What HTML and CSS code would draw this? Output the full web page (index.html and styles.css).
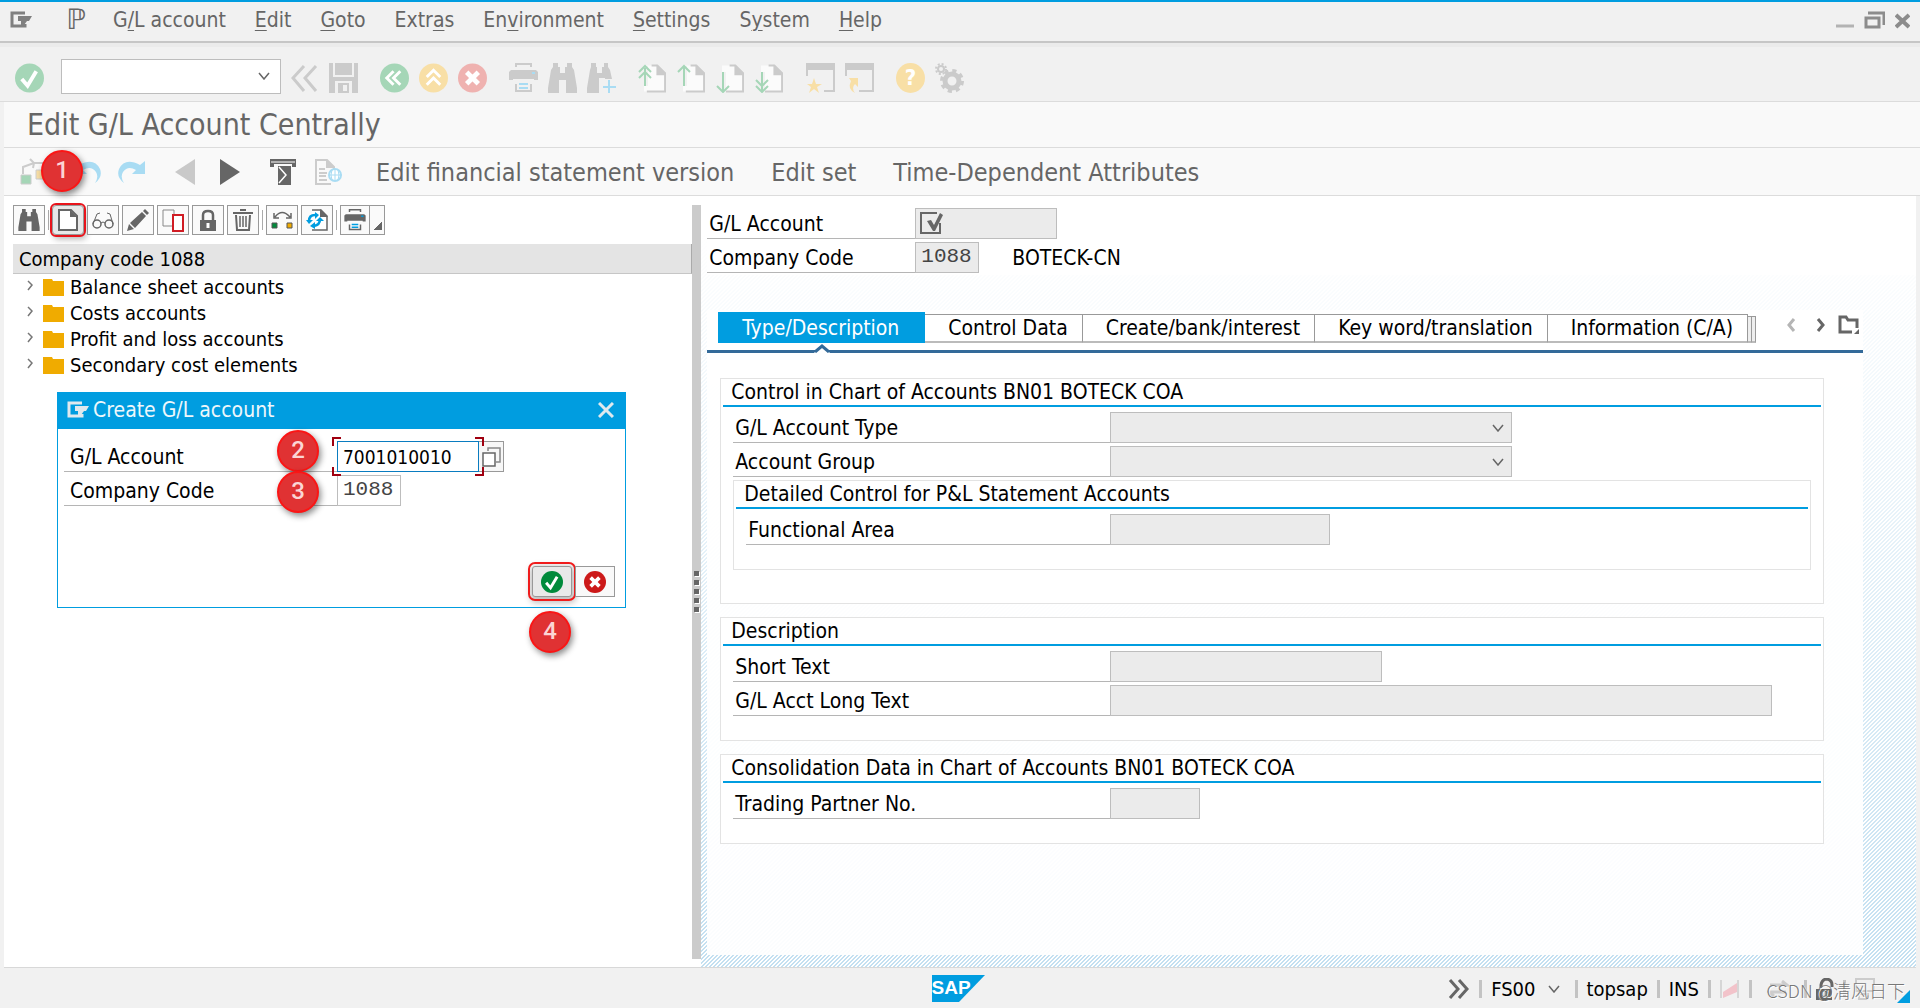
FILE: index.html
```html
<!DOCTYPE html>
<html lang="en">
<head>
<meta charset="utf-8">
<title>Edit G/L Account Centrally</title>
<link rel="stylesheet" href="styles.css">
</head>
<body>
<svg class="defs" aria-hidden="true">
  <symbol id="exit" viewBox="0 0 22 18"><path d="M15 2H2v13h13v-2" fill="none" stroke="currentColor" stroke-width="3"/><path d="M8 5h14l-3 5h-2l-3 4h-3v-4H8z" fill="currentColor"/></symbol>
  <symbol id="binoc" viewBox="0 0 29 30"><path d="M5 0h5v4h2v6h5V4h2V0h5v4l2 3 3 18v5H18V17h-7v13H0v-5L3 7l2-3z" fill="currentColor"/></symbol>
  <symbol id="printer" viewBox="0 0 29 30"><path d="M7 4V1h15v3M7 21v7h15v-7" fill="none" stroke="currentColor" stroke-width="2"/><path d="M2 7h25l2 2v8h-4v-1H4v1H0V9z" fill="currentColor"/><path d="M10 21h9M10 25h9M23 10h3" stroke="var(--ink)" stroke-width="2"/></symbol>
  <symbol id="chev" viewBox="0 0 12 8"><path d="M1 1l5 6 5-6" fill="none" stroke="currentColor" stroke-width="1.5"/></symbol>
  <symbol id="folder" viewBox="0 0 21 18"><path d="M0 1h9l1 2h11v15H0z" fill="#f0ab00"/></symbol>
  <symbol id="page" viewBox="0 0 24 30"><path d="M1 2h14l8 8v19H1z" fill="#fbfbfb"/><path d="M9 2h6l8 8v19H4" fill="none" stroke="currentColor" stroke-width="2"/><path d="M14 1l10 9v2H14z" fill="currentColor"/></symbol>
  <symbol id="tick" viewBox="0 0 30 30"><circle cx="15" cy="15" r="15" fill="currentColor"/><path d="M7 16l6 7 9-15" fill="none" stroke="#fff" stroke-width="4"/></symbol>
  <symbol id="cross" viewBox="0 0 30 30"><circle cx="15" cy="15" r="15" fill="currentColor"/><path d="M9 9l12 12M21 9L9 21" fill="none" stroke="#fff" stroke-width="5"/></symbol>
</svg>

<header class="menubar">
  <svg class="exit"><use href="#exit"/></svg>
  <span class="session">ℙ</span>
  <nav class="menus">
    <button>G<u>/</u>L account</button><button><u>E</u>dit</button><button><u>G</u>oto</button><button>Extr<u>a</u>s</button><button>En<u>v</u>ironment</button><button><u>S</u>ettings</button><button>S<u>y</u>stem</button><button><u>H</u>elp</button>
  </nav>
  <div class="winbtns">
    <button aria-label="Minimize"><svg width="18" height="18"><path d="M0 15h18" stroke="#b3b3b3" stroke-width="3"/></svg></button>
    <button aria-label="Restore"><svg width="21" height="18"><path d="M4 2h16v12" fill="none" stroke="#8c8c8c" stroke-width="3"/><path d="M2 7h13v9H2z" fill="none" stroke="#8c8c8c" stroke-width="3"/></svg></button>
    <button aria-label="Close"><svg width="15" height="18"><path d="M1 4l13 12M14 4L1 16" stroke="#8c8c8c" stroke-width="4"/></svg></button>
  </div>
</header>

<div class="stdbar">
  <button class="ib g" aria-label="Enter"><svg><use href="#tick"/></svg></button>
  <div class="command"><input type="text" aria-label="Command"><svg class="chev"><use href="#chev"/></svg></div>
  <div class="grp">
    <button class="ib" aria-label="Hide command"><svg viewBox="0 0 29 30"><path d="M14 3L3 15l11 13M26 3L15 15l11 13" fill="none" stroke="currentColor" stroke-width="3"/></svg></button>
    <button class="ib" aria-label="Save"><svg viewBox="0 0 29 30"><path d="M0 0h4v14h21V0h4v30H0z" fill="currentColor"/><path d="M6 0h17v12H6z" fill="currentColor"/><path d="M6 18h17v12H6z" fill="#f1f1f1"/><path d="M9 20h11v10H9z" fill="currentColor"/><path d="M14 22h4v6h-4z" fill="#f1f1f1"/></svg></button>
  </div>
  <div class="grp">
    <button class="ib g" aria-label="Back"><svg viewBox="0 0 30 30"><circle cx="15" cy="15" r="15" fill="currentColor"/><path d="M14 8l-7 7 7 7M21 8l-7 7 7 7" fill="none" stroke="#fff" stroke-width="3"/></svg></button>
    <button class="ib y" aria-label="Exit"><svg viewBox="0 0 30 30"><circle cx="15" cy="15" r="15" fill="currentColor"/><path d="M8 14l7-7 7 7M8 22l7-7 7 7" fill="none" stroke="#fff" stroke-width="3"/></svg></button>
    <button class="ib r" aria-label="Cancel"><svg><use href="#cross"/></svg></button>
  </div>
  <div class="grp">
    <button class="ib" aria-label="Print"><svg><use href="#printer"/></svg></button>
    <button class="ib" aria-label="Find"><svg><use href="#binoc"/></svg></button>
    <button class="ib" aria-label="Find next"><svg viewBox="0 0 29 30"><path d="M4 0h5v4h1v6h5V4h2V0h4v4l2 3 2 9h-7v-1h-6v15H0v-5L3 7l1-3z" fill="currentColor"/><path d="M22 17v13M16 24h13" stroke="#a9dcf3" stroke-width="2"/></svg></button>
  </div>
  <div class="grp">
    <button class="ib" aria-label="First page"><svg viewBox="0 0 29 30"><use href="#page" x="5" width="23" height="30"/><path class="halo" d="M7 3v20"/><path d="M7 5v18M1 9l6-6 6 6M1 15l6-6 6 6" fill="none" stroke="#a5d6b7" stroke-width="2"/></svg></button>
    <button class="ib" aria-label="Previous page"><svg viewBox="0 0 29 30"><use href="#page" x="5" width="23" height="30"/><path class="halo" d="M7 3v20"/><path d="M7 3v20M1 9l6-6 6 6" fill="none" stroke="#a5d6b7" stroke-width="2"/></svg></button>
    <button class="ib" aria-label="Next page"><svg viewBox="0 0 29 30"><use href="#page" x="5" width="23" height="30"/><path class="halo" d="M7 9v21"/><path d="M7 9v19M1 23l6 6 6-6" fill="none" stroke="#a5d6b7" stroke-width="2"/></svg></button>
    <button class="ib" aria-label="Last page"><svg viewBox="0 0 29 30"><use href="#page" x="5" width="23" height="30"/><path class="halo" d="M7 9v21"/><path d="M7 9v19M1 17l6 6 6-6M1 23l6 6 6-6" fill="none" stroke="#a5d6b7" stroke-width="2"/></svg></button>
  </div>
  <div class="grp">
    <button class="ib" aria-label="New session"><svg viewBox="0 0 29 30"><path d="M0 0h29v7H0zM0 7h2v6H0z" fill="currentColor"/><path d="M28 6v22H18" fill="none" stroke="currentColor" stroke-width="2"/><path d="M8 15l2 6h6l-5 3 2 6-5-4-5 4 2-6-4-3h5z" fill="#f8dfa6"/></svg></button>
    <button class="ib" aria-label="Create shortcut"><svg viewBox="0 0 29 30"><path d="M0 0h29v7H0zM0 7h2v6H0z" fill="currentColor"/><path d="M28 6v22H14" fill="none" stroke="currentColor" stroke-width="2"/><path d="M4 15h9v9l-3-3q-4 4 0 9-8-4-4-12z" fill="#f8dfa6"/></svg></button>
  </div>
  <div class="grp">
    <button class="ib y help" aria-label="Help">?</button>
    <button class="ib" aria-label="Customize layout"><svg viewBox="0 0 29 30"><circle cx="17" cy="18" r="7" fill="none" stroke="currentColor" stroke-width="5"/><circle cx="17" cy="18" r="10" fill="none" stroke="currentColor" stroke-width="4" stroke-dasharray="4 3.85"/><circle cx="6" cy="6" r="3" fill="none" stroke="currentColor" stroke-width="2"/><circle cx="6" cy="6" r="5" fill="none" stroke="currentColor" stroke-width="2" stroke-dasharray="2 1.93"/></svg></button>
  </div>
</div>

<h1 class="title">Edit G/L Account Centrally</h1>

<div class="appbar">
  <div class="pair">
    <button class="ab" aria-label="Change view"><svg viewBox="0 0 28 28"><path d="M3 16V9l11-4M10 1l4 4-1 5M14 5h12v6" fill="none" stroke="#ccc" stroke-width="2"/><path d="M1 17h10v9H1z" fill="#a5d6b7" stroke="#ccc"/><path d="M16 12h10v9H16z" fill="#f8dfa6" stroke="#ccc"/></svg></button>
  </div>
  <div class="pair">
    <button class="ab" aria-label="Undo"><svg viewBox="0 0 28 28"><path d="M1 3v13h13l-4-4q8-5 13 2 3 5-1 11 8-6 5-14Q21-1 6 7z" fill="#a9dcf3"/></svg></button>
    <button class="ab" aria-label="Redo"><svg viewBox="0 0 28 28"><path d="M27 3v13H14l4-4q-8-5-13 2-3 5 1 11-8-6-5-14Q7-1 22 7z" fill="#a9dcf3"/></svg></button>
  </div>
  <div class="pair">
    <button class="ab" aria-label="Previous"><svg viewBox="0 0 28 28"><path d="M24 1v26L4 14z" fill="#c9c9c9"/></svg></button>
    <button class="ab" aria-label="Next"><svg viewBox="0 0 28 28"><path d="M4 1v26l20-13z" fill="#666"/></svg></button>
  </div>
  <div class="pair">
    <button class="ab" aria-label="Other object"><svg viewBox="0 0 28 28"><path d="M1 1h26v8h-4V6H5v3H1z" fill="#666"/><path d="M2 4h24" stroke="#fff"/><path d="M9 8h13v19H9z" fill="#666"/><path d="M10 9l7 8-7 8" fill="none" stroke="#fff" stroke-width="1.5"/></svg></button>
    <button class="ab" aria-label="Display in web"><svg viewBox="0 0 28 28"><path d="M17 26H2V2h11l7 7v2" fill="none" stroke="#ccc" stroke-width="2"/><path d="M12 1l9 9h-9z" fill="#ccc"/><path d="M5 11h6M5 15h8M5 18h7M5 22h8" stroke="#ccc" stroke-width="2"/><circle cx="21" cy="17" r="6" fill="#fff" stroke="#a9dcf3" stroke-width="2"/><path d="M15 17h13M21 11v12M18 12q-2 5 0 10M24 12q2 5 0 10" fill="none" stroke="#a9dcf3"/></svg></button>
  </div>
  <div class="apptexts"><button>Edit financial statement version</button><button>Edit set</button><button>Time-Dependent Attributes</button></div>
  <span class="badge b1">1</span>
</div>

<main class="work">
  <section class="nav">
    <div class="tools">
      <button class="tb" aria-label="Find"><svg width="22" height="22"><use href="#binoc"/></svg></button>
      <i></i>
      <button class="tb marked" aria-label="Create"><svg width="20" height="22"><path d="M1 1h12l6 6v14H1z" fill="#fff" stroke="#666" stroke-width="2"/><path d="M12 1l7 7h-7z" fill="#666"/></svg></button>
      <button class="tb" aria-label="Display"><svg width="22" height="18"><path d="M1 13L5 3l3-1M21 13L18 3l-3-1" fill="none" stroke="#666"/><circle cx="5" cy="13" r="4" fill="none" stroke="#666" stroke-width="1.5"/><circle cx="17" cy="13" r="4" fill="none" stroke="#666" stroke-width="1.5"/><path d="M9 12q2-2 4 0" fill="none" stroke="#666"/></svg></button>
      <button class="tb" aria-label="Change"><svg width="22" height="22"><path d="M0 22l2-7 5 5zM3 14L15 3l4 4L8 19zM16 2l2-2 4 4-2 2z" fill="#666"/></svg></button>
      <button class="tb" aria-label="Copy"><svg width="23" height="23"><path d="M10 17H1V1h11v4" fill="none" stroke="#888" stroke-width="1"/><path d="M11 6h10v16H11z" fill="#fff" stroke="#d01c24" stroke-width="2"/></svg></button>
      <button class="tb" aria-label="Lock"><svg width="18" height="22"><path d="M4 11V6q0-4 5-4t5 4v5" fill="none" stroke="#666" stroke-width="2.5"/><path d="M1 11h16v11H1z" fill="#666"/><path d="M9 14v5" stroke="#fff" stroke-width="3"/></svg></button>
      <button class="tb" aria-label="Delete"><svg width="20" height="22"><path d="M0 4h20M7 1h6" stroke="#666" stroke-width="2"/><path d="M3 6l1 15h12l1-15" fill="none" stroke="#666" stroke-width="2"/><path d="M7 7v11M10 7v11M13 7v11" stroke="#666" stroke-width="1.5"/></svg></button>
      <i></i>
      <button class="tb" aria-label="Relations"><svg width="23" height="20"><path d="M4 7q7-9 15 0M3 3v5h5M20 3v5h-5" fill="none" stroke="#666" stroke-width="1.5"/><path d="M1 13h5v5H1z" fill="#008a3b" stroke="#555"/><path d="M16 13h5v5h-5z" fill="#f0ab00" stroke="#555"/></svg></button>
      <button class="tb" aria-label="Refresh"><svg width="22" height="22"><path d="M6 1h9l6 6v14H6" fill="#fff" stroke="#666" stroke-width="1.5"/><path d="M14 0l8 8h-8z" fill="#666"/><path d="M3 12q0-6 6-6M14 10q0 6-6 7" fill="none" stroke="#009de0" stroke-width="2.5"/><path d="M0 11h7l-4 4zM9 3l4 3-4 4zM10 12h8l-4-4zM9 13v7l-5-3z" fill="#009de0"/></svg></button>
      <i></i>
      <button class="tb wide" aria-label="Print"><svg width="22" height="22"><use href="#printer"/></svg><span class="more"></span></button>
    </div>
    <div class="treehead">Company code 1088</div>
    <ul class="tree">
      <li><svg class="tw" viewBox="0 0 7 11"><path d="M1 1l4 4-4 5" fill="none" stroke="#777" stroke-width="1.5"/></svg><svg class="fo"><use href="#folder"/></svg>Balance sheet accounts</li>
      <li><svg class="tw" viewBox="0 0 7 11"><path d="M1 1l4 4-4 5" fill="none" stroke="#777" stroke-width="1.5"/></svg><svg class="fo"><use href="#folder"/></svg>Costs accounts</li>
      <li><svg class="tw" viewBox="0 0 7 11"><path d="M1 1l4 4-4 5" fill="none" stroke="#777" stroke-width="1.5"/></svg><svg class="fo"><use href="#folder"/></svg>Profit and loss accounts</li>
      <li><svg class="tw" viewBox="0 0 7 11"><path d="M1 1l4 4-4 5" fill="none" stroke="#777" stroke-width="1.5"/></svg><svg class="fo"><use href="#folder"/></svg>Secondary cost elements</li>
    </ul>

    <div class="dialog" role="dialog" aria-labelledby="dlg">
      <div class="dlghead"><svg class="exit"><use href="#exit"/></svg><h2 id="dlg">Create G/L account</h2><button aria-label="Close"><svg width="16" height="16"><path d="M1 1l14 14M15 1L1 15" stroke="#dfe9ee" stroke-width="3"/></svg></button></div>
      <div class="dlgbody">
        <div class="row"><label for="acc">G/L Account</label><div class="focus"><input id="acc" type="text" value="7001010010"></div><button class="f4" aria-label="Possible entries"><svg width="19" height="20"><path d="M6 4V1h12v14h-4" fill="none" stroke="#888" stroke-width="1.5"/><path d="M1 6h12v13H1z" fill="#fff" stroke="#666" stroke-width="1.5"/></svg></button></div>
        <div class="row"><label for="cc">Company Code</label><input id="cc" class="code plain" type="text" value="1088"></div>
        <div class="actions">
          <button class="ok" aria-label="Continue"><svg><use href="#tick"/></svg></button><button class="no" aria-label="Cancel"><svg><use href="#cross"/></svg></button>
        </div>
      </div>
      <span class="badge b2">2</span><span class="badge b3">3</span><span class="badge b4">4</span>
    </div>
  </section>

  <div class="splitter"><span></span><span></span><span></span><span></span><span></span></div>

  <section class="detail">
    <div class="keys">
      <div class="row"><label for="k1">G/L Account</label><div class="req"><input id="k1" type="text" readonly><svg width="27" height="26"><path d="M19 4H3v20h19V14" fill="none" stroke="#666" stroke-width="2"/><path d="M9 12l4-1 3 5 6-12 3 2-8 16h-2z" fill="#666"/></svg></div></div>
      <div class="row"><label for="k2">Company Code</label><input id="k2" class="code" type="text" value="1088" readonly><span class="name">BOTECK-CN</span></div>
    </div>
    <div class="strip">
      <div class="tabs" role="tablist">
        <button class="tab active" role="tab" aria-selected="true">Type/Description</button><button class="tab" role="tab">Control Data</button><button class="tab" role="tab">Create/bank/interest</button><button class="tab" role="tab">Key word/translation</button><button class="tab" role="tab">Information (C/A)</button><span class="stack"></span><span class="stack"></span>
      </div>
      <div class="tabnav">
        <button aria-label="Scroll left"><svg width="10" height="14"><path d="M8 1L3 7l5 6" fill="none" stroke="#b5b5b5" stroke-width="3"/></svg></button>
        <button aria-label="Scroll right"><svg width="10" height="14"><path d="M2 1l5 6-5 6" fill="none" stroke="#666" stroke-width="3"/></svg></button>
        <button aria-label="Tab list"><svg width="22" height="20"><path d="M14 17H2V2h6l2 3h9v8" fill="none" stroke="#666" stroke-width="3"/><path d="M21 14v5h-5z" fill="#666"/></svg></button>
      </div>
    </div>
    <div class="rule"><svg width="16" height="9"><path d="M0 9l8-8 8 8z" fill="#fff"/><path d="M1 8l7-6 7 6" fill="none" stroke="#336a99" stroke-width="3"/></svg></div>
    <div class="page">
      <fieldset class="box tall">
        <legend>Control in Chart of Accounts BN01 BOTECK COA</legend>
        <div class="rows">
          <div class="row"><label for="f1">G/L Account Type</label><div class="combo"><select id="f1" disabled></select><svg class="chev"><use href="#chev"/></svg></div></div>
          <div class="row"><label for="f2">Account Group</label><div class="combo"><select id="f2" disabled></select><svg class="chev"><use href="#chev"/></svg></div></div>
          <fieldset class="box inner">
            <legend>Detailed Control for P&amp;L Statement Accounts</legend>
            <div class="rows"><div class="row"><label for="f3">Functional Area</label><input id="f3" class="w220" type="text" readonly></div></div>
          </fieldset>
        </div>
      </fieldset>
      <fieldset class="box">
        <legend>Description</legend>
        <div class="rows">
          <div class="row"><label for="f4">Short Text</label><input id="f4" class="w272" type="text" readonly></div>
          <div class="row"><label for="f5">G/L Acct Long Text</label><input id="f5" class="w662" type="text" readonly></div>
        </div>
      </fieldset>
      <fieldset class="box">
        <legend>Consolidation Data in Chart of Accounts BN01 BOTECK COA</legend>
        <div class="rows"><div class="row"><label for="f6">Trading Partner No.</label><input id="f6" class="w90" type="text" readonly></div></div>
      </fieldset>
    </div>
  </section>
</main>

<footer class="status">
  <div class="logo"><svg viewBox="0 0 53 27"><path d="M0 0h53L27 27H0z" fill="#009de0"/></svg><span>SAP</span></div>
  <div class="info">
    <svg class="dbl" width="22" height="20"><path d="M2 1l8 9-8 9M11 1l8 9-8 9" fill="none" stroke="#666" stroke-width="3"/></svg>
    <i></i><span>FS00</span><svg class="chev"><use href="#chev"/></svg>
    <i></i><span>topsap</span><i></i><span>INS</span><i></i>
    <svg width="20" height="20"><path d="M1 1v18M18 1v18" stroke="#d6d6d6" stroke-width="2"/><path d="M3 13l14-9v9L3 19z" fill="#f2c3ca"/></svg>
    <i></i><svg class="xfer" width="22" height="18"><path d="M3 5h17l-5-4M19 12H2l5 4" fill="none" stroke="#ccc" stroke-width="3"/></svg>
    <i></i><svg width="18" height="22"><path d="M5 10V7q1-6 6-6 5 1 5 6v2" fill="none" stroke="#666" stroke-width="3"/><path d="M0 11h16v11H0z" fill="#666"/><path d="M8 14v5" stroke="#ccc" stroke-width="3"/></svg>
    <i></i><svg width="20" height="22"><path d="M1 1h18v12H1zM4 16h9v5H4z" fill="none" stroke="#ccc" stroke-width="2"/></svg>
    <svg class="grip" width="13" height="13"><path d="M13 0v13H0z" fill="#009de0"/></svg>
  </div>
  <span class="mark">CSDN @清风日下</span>
</footer>
</body>
</html>
```
FILE: styles.css
```css
* { box-sizing: border-box; }
html { height: 100%; }
body {
  margin: 0; min-height: 100%; display: flex; flex-direction: column;
  border-top: 2px solid #009de0; background: #f1f1f1; color: #000;
  font-family: "DejaVu Sans Condensed", "Noto Sans", sans-serif; font-size: 21px; line-height: 24px;
}
button { border: 0; margin: 0; padding: 0; background: none; font: inherit; color: inherit; display: inline-flex; align-items: center; justify-content: center; }
input, select { font: inherit; border: 1px solid #bdbdbd; background: #ebebeb; border-radius: 0; margin: 0; padding: 0 5px; color: #000; opacity: 1; appearance: none; outline: 0; }
svg { display: block; flex: none; }
.defs { position: absolute; width: 0; height: 0; }
.exit { width: 22px; height: 18px; }
.chev { width: 12px; height: 8px; color: #666; }

/* menu bar */
.menubar { display: flex; align-items: center; height: 41px; padding: 0 10px 4px; border-bottom: 2px solid #c6c6c6; color: #666; }
.menubar .exit { color: #808080; }
.session { width: 22px; margin: 0 26px 0 33px; font-family: "DejaVu Sans", sans-serif; font-size: 28px; line-height: 30px; text-align: center; }
.menus { display: flex; gap: 29px; }
.menus button { display: block; }
u { text-underline-offset: 3px; text-decoration-thickness: 1px; }
.winbtns { margin-left: auto; display: flex; gap: 10px; align-items: center; }

/* standard toolbar */
.stdbar { display: flex; align-items: center; height: 59px; padding: 8px 15px 0; border-top: 4px solid #ebebeb; border-bottom: 1px solid #dcdcdc; color: #cbcbcb; --ink: #a9dcf3; }
.ib { width: 29px; height: 30px; }
.ib svg { width: 29px; height: 30px; }
.ib.g { color: #a5d6b7; } .ib.y { color: #f8dfa6; } .ib.r { color: #efb2b0; }
.halo { fill: none; stroke: #f1f1f1; stroke-width: 6; }
.help.ib.y { background: #f8dfa6; color: #fff; border-radius: 50%; font-weight: bold; font-size: 22px; }
.command { display: flex; align-items: center; margin: 0 9px 4px 17px; width: 220px; height: 35px; border: 1px solid #bdbdbd; background: #fff; padding-right: 10px; }
.command input { border: 0; background: none; flex: 1; min-width: 0; }
.grp { display: flex; gap: 10px; margin-right: 22px; }

.title { margin: 0 0 0 4px; height: 46px; padding-left: 23px; font-size: 30px; line-height: 46px; font-weight: normal; color: #666; background: #f9f9f9; border-bottom: 1px solid #dcdcdc; }
.appbar { position: relative; margin-left: 4px; height: 48px; display: flex; align-items: center; gap: 25px; padding: 0 16px; background: #f9f9f9; border-bottom: 1px solid #dcdcdc; color: #666; }
.pair { display: flex; gap: 17px; }
.ab, .ab svg { width: 28px; height: 28px; }
.apptexts { display: flex; gap: 37px; margin-left: 9px; padding-top: 2px; font-size: 25px; line-height: 30px; }

.badge { position: absolute; width: 42px; height: 42px; border-radius: 50%; border: 2px solid #fb1515; background: #e03233; color: #fbd5d5; font: 500 24px/36px Roboto, sans-serif; text-align: center; box-shadow: 2px 3px 6px rgba(0,0,0,.45); z-index: 3; }
.b1 { left: 37px; top: 2px; }

/* work area */
.work { flex: 1; display: flex; margin: 0 4px; background: #fff; min-height: 600px; border-bottom: 1px solid #d8d8d8; }
.nav { position: relative; flex: 0 0 36%; padding: 9px 0 0 9px; }
.tools { display: flex; gap: 3px; height: 30px; }
.tools i { width: 1px; height: 20px; margin-top: 5px; background: #aaa; }
.tb { width: 32px; height: 30px; border: 1px solid #999; background: #fafafa; color: #666; --ink: #009de0; }
.marked { outline: 2px solid #e8141b; border-radius: 4px; background: #e8e8e8; box-shadow: 2px 4px 6px rgba(0,0,0,.3); }
.wide { width: 45px; padding-left: 3px; justify-content: flex-start; }
.more { width: 15px; height: 28px; margin-left: 3px; border-left: 1px solid #999; background: linear-gradient(135deg, transparent 50%, #666 50%) 4px 16px / 8px 8px no-repeat; }
.treehead { margin-top: 9px; height: 30px; padding: 2px 6px; font-size: 20px; line-height: 26px; background: #e4e4e4; border-bottom: 1px solid #c6c6c6; border-right: 1px solid #aaa; }
.tree { list-style: none; margin: 0; padding: 0 0 0 14px; font-size: 20px; }
.tree li { display: flex; align-items: center; height: 26px; }
.tw { width: 7px; height: 11px; margin: 0 9px 4px 0; }
.fo { width: 21px; height: 18px; margin-right: 6px; }

.row { display: flex; height: 31px; }
.row + .row { margin-top: 3px; }
.row label { flex: none; padding: 3px 0 0 2px; line-height: 26px; border-bottom: 1px solid #b5b5b5; }
.row input, .row select { height: 31px; }
.row input.code { width: 64px; padding: 0 5px 2px; font: 21px "Liberation Mono", monospace; color: #444; }
.row input.plain { background: #fff; }

.dialog { position: absolute; left: 53px; top: 196px; width: 569px; border: 1px solid #009de0; background: #fff; }
.dlghead { display: flex; align-items: center; height: 36px; padding: 0 11px 2px 9px; background: #009de0; color: #dfe9ee; }
.dlghead h2 { margin: 0 auto 0 4px; font-size: 21px; font-weight: normal; color: #eef7fb; }
.dlgbody { padding: 12px 10px 10px 6px; }
.dlgbody label { width: 273px; padding-left: 6px; }
.focus { width: 142px; position: relative; background: #fff; }
.focus input { width: 142px; border-color: #0a7cc0; background: #fff; font-size: 19px; }
.focus::before { content: ""; position: absolute; inset: -4px -5px; pointer-events: none; --c: #a00010;
  background: linear-gradient(var(--c), var(--c)) 0 0/9px 2px, linear-gradient(var(--c), var(--c)) 0 0/2px 9px, linear-gradient(var(--c), var(--c)) 100% 0/9px 2px, linear-gradient(var(--c), var(--c)) 100% 0/2px 9px, linear-gradient(var(--c), var(--c)) 0 100%/9px 2px, linear-gradient(var(--c), var(--c)) 0 100%/2px 9px, linear-gradient(var(--c), var(--c)) 100% 100%/9px 2px, linear-gradient(var(--c), var(--c)) 100% 100%/2px 9px;
  background-repeat: no-repeat; }
.f4 { width: 25px; height: 31px; border: 1px solid #999; border-left: 0; background: #f7f7f7; }
.actions { display: flex; justify-content: flex-end; gap: 1px; margin-top: 60px; }
.actions button { width: 40px; height: 31px; border: 1px solid #999; background: #f9f9f9; }
.actions svg { width: 22px; height: 22px; }
.actions .ok { color: #008a3b; background: #e9e9e9; outline: 2px solid #f01c1c; outline-offset: 2px; border-radius: 3px; margin-right: 2px; box-shadow: 1px 3px 6px 3px rgba(0,0,0,.25); }
.actions .no { color: #cc1919; }
.b2 { left: 219px; top: 37px; } .b3 { left: 219px; top: 78px; } .b4 { left: 471px; top: 218px; }

.splitter { width: 9px; margin: 9px 0 8px; padding-top: 18px; flex: none; background: #cbcbcb; display: flex; flex-direction: column; align-items: center; justify-content: center; gap: 4px; }
.splitter span { width: 5px; height: 5px; background: #666; box-shadow: 1px 1px #fff; }

/* detail screen over a hatched backdrop that gets stronger downwards */
.detail { flex: 1; min-width: 0; padding: 0 53px 12px 6px; display: flex; flex-direction: column;
  background: linear-gradient(#fff 5%, rgba(255,255,255,0)), linear-gradient(135deg, #fff 25%, #c3e0f1 25%, #c3e0f1 50%, #fff 50%, #fff 75%, #c3e0f1 75%) 0 0/4px 4px; }
.keys { padding: 12px 0 0; height: 79px; background: #fff; margin-right: -53px; }
.keys label { width: 208px; }
.req { position: relative; width: 142px; }
.req input { width: 142px; }
.req svg { position: absolute; left: 3px; top: 1px; }
.name { padding: 3px 0 0 33px; line-height: 26px; }
.strip { display: flex; justify-content: space-between; margin-top: 35px; padding: 2px 3px 0 11px; height: 40px; background: #fff; }
.tabs { display: flex; align-items: flex-start; height: 31px; }
.tab { height: 29px; margin-top: 2px; padding: 0 14px 0 23px; background: #fff; border-top: 1px solid #999; border-right: 1px solid #999; border-bottom: 2px solid #bbb; white-space: nowrap; }
.tab.active { height: 31px; margin: 0; padding: 1px 26px 0 24px; background: #009de0; color: #fff; border: 0; }
.stack { width: 4px; height: 27px; margin-top: 4px; background: #eee; border: 1px solid #999; border-left: 0; border-bottom: 2px solid #bbb; }
.tabnav { display: flex; align-items: center; gap: 12px; height: 26px; }
.tabnav button:first-child { margin-right: 8px; }
.rule { height: 3px; background: #336a99; position: relative; }
.rule svg { position: absolute; left: 107px; bottom: 0; }
.page { flex: 1; padding: 25px 39px 0 13px; display: flex; flex-direction: column; gap: 13px; background: rgba(255,255,255,.93); }
.box { margin: 0; padding: 0 2px; border: 1px solid #e3e3e3; min-width: 0; background: #fff; min-height: 90px; }
.box legend { float: left; width: 100%; height: 28px; padding: 1px 0 0 8px; line-height: 24px; border-bottom: 2px solid #009de0; }
.rows { clear: both; padding: 5px 0 24px 10px; }
.box .row label { width: 377px; }
.tall { min-height: 226px; }
.inner { margin: 3px 10px 0 0; min-height: 90px; }
.box .inner .row label { width: 364px; }
.combo { position: relative; display: flex; width: 402px; }
.combo select { width: 100%; }
.combo .chev { position: absolute; right: 8px; top: 12px; }
.w220 { width: 220px; } .w272 { width: 272px; } .w662 { width: 662px; } .w90 { width: 90px; }

/* status bar */
.status { position: relative; display: grid; grid-template-columns: 1fr auto 1fr; align-items: center; height: 40px; padding-right: 4px; font-size: 20px; }
.logo { grid-column: 2; position: relative; width: 53px; height: 27px; }
.logo svg { width: 53px; height: 27px; }
.logo span { position: absolute; left: 0; top: 0; color: #fff; font: bold 19px/26px "Liberation Sans", sans-serif; }
.info { display: flex; justify-content: flex-end; align-items: center; gap: 9px; padding: 2px 6px 0 0; }
.info i { width: 3px; height: 18px; background: #c3c3c3; }
.info .chev { margin: 0 6px 0 3px; }
.xfer { margin: 0 6px; }
.grip { margin: 14px 0 0 13px; }
.mark { position: absolute; right: 15px; top: 10px; font: 300 18px/24px "Noto Sans CJK SC", sans-serif; color: #777; text-shadow: 1px 1px #fff; }
```
